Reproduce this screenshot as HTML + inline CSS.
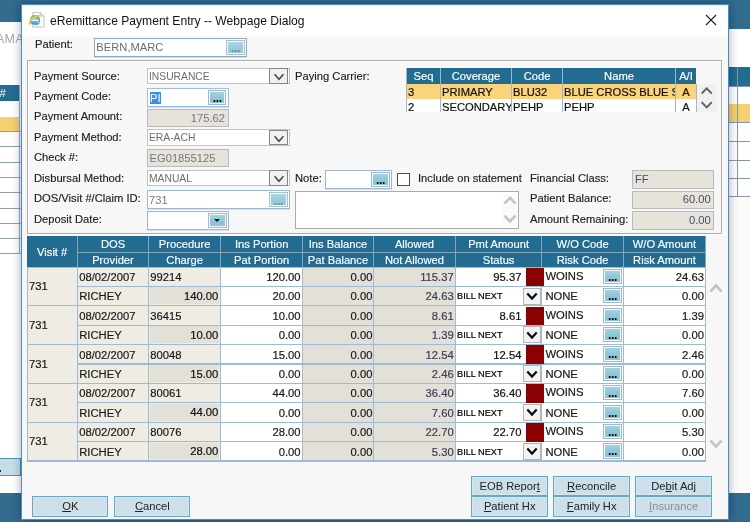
<!DOCTYPE html><html><head><meta charset="utf-8"><title>eRemittance Payment Entry</title><style>
html,body{margin:0;padding:0;}
body{width:750px;height:522px;overflow:hidden;position:relative;background:#316b8e;font-family:"Liberation Sans",Arial,sans-serif;font-size:11px;color:#1a1a1a;}
div,span{box-sizing:border-box;}
.a{position:absolute;}
.lbl{position:absolute;font-size:11.2px;color:#222;-webkit-text-stroke:0.15px;white-space:nowrap;line-height:14px;}
.inp{position:absolute;background:#fff;border:1px solid #a9b7c6;box-shadow:0 1px 0 #d6e1ee;font-size:11.2px;line-height:14px;color:#6d6d6d;white-space:nowrap;overflow:hidden;}
.dis{background:#e6e3da;border:1px solid #b9b9b9;color:#77777f;box-shadow:none;}
.sel{position:absolute;background:#fff;border:1px solid #c2c2c2;font-size:10.3px;color:#6d6d6d;white-space:nowrap;}
.dots{position:absolute;background:linear-gradient(#a3d2de,#8dc5d6 60%);border:1px solid #f2f8fb;outline:1px solid #a3b7cf;color:#000;font-size:12px;font-weight:bold;text-align:center;letter-spacing:-0.3px;overflow:hidden;}
.hd{position:absolute;background:#226c92;color:#fff;font-size:11.2px;-webkit-text-stroke:0.15px;text-align:center;white-space:nowrap;overflow:hidden;}
.c{position:absolute;font-size:11.25px;white-space:nowrap;overflow:hidden;color:#111;padding-top:0.5px;-webkit-text-stroke:0.2px;}
.btn{position:absolute;background:#cde0ea;border:1.4px solid #66a7c9;box-shadow:inset 0 0 0 1px #d6e6ef;font-size:11.2px;color:#2a2a2a;text-align:center;white-space:nowrap;}
u{text-decoration:underline;}
</style></head><body><div id="root" style="position:absolute;left:0;top:0;width:750px;height:522px;overflow:hidden;will-change:transform;">
<div class="a" style="left:0;top:22px;width:750px;height:471px;background:#fff;"></div>
<div class="a" style="left:-4px;top:31.8px;font-size:12.4px;line-height:14px;color:#a8a8a8;letter-spacing:0.3px;">AMA</div>
<div class="a" style="left:0;top:85px;width:20px;height:15.6px;background:#226c92;color:#fff;font-size:11.5px;line-height:16px;text-indent:-0.5px;">#</div>
<div class="a" style="left:0;top:116.5px;width:20px;height:15.3px;background:#f6d06f;"></div>
<div class="a" style="left:0;top:131px;width:21px;height:1.2px;background:#8e9eb0;"></div>
<div class="a" style="left:0;top:146px;width:21px;height:1.2px;background:#8e9eb0;"></div>
<div class="a" style="left:0;top:162px;width:21px;height:1.2px;background:#8e9eb0;"></div>
<div class="a" style="left:0;top:177px;width:21px;height:1.2px;background:#8e9eb0;"></div>
<div class="a" style="left:0;top:192px;width:21px;height:1.2px;background:#8e9eb0;"></div>
<div class="a" style="left:0;top:208px;width:21px;height:1.2px;background:#8e9eb0;"></div>
<div class="a" style="left:0;top:223px;width:21px;height:1.2px;background:#8e9eb0;"></div>
<div class="a" style="left:0;top:238px;width:21px;height:1.2px;background:#8e9eb0;"></div>
<div class="a" style="left:0;top:253px;width:21px;height:1.2px;background:#8e9eb0;"></div>
<div class="a" style="left:19.2px;top:85px;width:1.2px;height:169px;background:#a3afbe;"></div>
<div class="a" style="left:-2px;top:457.5px;width:22.8px;height:18px;background:#c6dce8;border:1px solid #4d92b8;"></div><div class="a" style="left:0;top:470px;width:1.2px;height:1.5px;background:#222;"></div>
<div class="a" style="left:728px;top:22px;width:22px;height:7px;background:#316b8e;"></div>
<div class="a" style="left:728px;top:67px;width:22px;height:19px;background:#226c92;"></div>
<div class="a" style="left:728px;top:104px;width:22px;height:18px;background:#f6d06f;"></div>
<div class="a" style="left:728px;top:86px;width:22px;height:1.3px;background:#8595ad;"></div>
<div class="a" style="left:728px;top:122px;width:22px;height:1.3px;background:#8595ad;"></div>
<div class="a" style="left:728px;top:141px;width:22px;height:1.3px;background:#8595ad;"></div>
<div class="a" style="left:728px;top:160px;width:22px;height:1.3px;background:#8595ad;"></div>
<div class="a" style="left:728px;top:178px;width:22px;height:1.3px;background:#8595ad;"></div>
<div class="a" style="left:728px;top:196px;width:22px;height:1.3px;background:#8595ad;"></div>
<div class="a" style="left:736.6px;top:67px;width:1.3px;height:130px;background:#8595ad;"></div>
<div class="a" style="left:728px;top:197px;width:22px;height:296px;background:#fbfbfa;"></div>
<div class="a" style="left:20.6px;top:4px;width:708.8px;height:516px;background:#f7f7f7;border:1px solid #3f8ede;border-left-width:1.4px;border-right-width:1.4px;box-shadow:0 0 9px rgba(0,0,0,.33);"></div>
<div class="a" style="left:22px;top:5px;width:706px;height:30.5px;background:#fff;"></div>
<svg class="a" style="left:28px;top:10px" width="18" height="19" viewBox="0 0 18 19">
<defs><radialGradient id="eg" cx="0.45" cy="0.4" r="0.7"><stop offset="0" stop-color="#9fdcf8"/><stop offset="0.55" stop-color="#47a6e6"/><stop offset="1" stop-color="#2b86cc"/></radialGradient></defs>
<path d="M4.400 2.700h8.300l3.300 3.300v11H4.400z" fill="#fdfdfd" stroke="#c2c2c2" stroke-width="1"/>
<path d="M12.700 2.700v3.300h3.300" fill="#f0f0f0" stroke="#bdbdbd" stroke-width="0.9"/>
<circle cx="7" cy="10" r="5.100" fill="url(#eg)"/>
<path d="M3.200 10.300h7.800" stroke="#eaf7ff" stroke-width="1.400" fill="none" opacity=".9"/>
<path d="M8.500 11.700h4.200l-1.200 2.300z" fill="#e8f5fc" opacity=".75"/>
<path d="M8.500 14.600c1.600-.2 2.800-1.100 3.400-2.500" stroke="#35b58f" stroke-width="1.100" fill="none" opacity=".8"/>
<path d="M1.500 13.900C1.600 9.600 5.600 5.700 11.400 5.700" stroke="#f6c61c" stroke-width="1.900" fill="none" stroke-linecap="round"/>
</svg>
<div class="a" style="left:50px;top:12.5px;font-size:12.1px;line-height:16px;color:#111;white-space:nowrap;" id="ttl">eRemittance Payment Entry -- Webpage Dialog</div>
<svg class="a" style="left:705px;top:14px" width="12" height="12" viewBox="0 0 12 12"><path d="M1 1l10 10M11 1L1 11" stroke="#222" stroke-width="1.1" fill="none"/></svg>
<div class="lbl" style="left:35px;top:37.3px;">Patient:</div>
<div class="inp" style="left:94px;top:38px;width:153px;height:18.5px;padding:1px 0 0 1.3px;border-color:#8fa8c4;">BERN,MARC</div>
<div class="dots" style="left:227px;top:41px;width:17px;height:13px;line-height:13px;opacity:.9;color:#5f7a86">...</div>
<div class="a" style="left:26.5px;top:60px;width:695.5px;height:173.6px;border:1px solid #acacac;box-shadow:inset 1px 1px 0 #fff, 1px 1px 0 #fff;"></div>
<div class="lbl" style="left:34px;top:68.6px;">Payment Source:</div>
<div class="lbl" style="left:34px;top:89px;">Payment Code:</div>
<div class="lbl" style="left:34px;top:109.3px;">Payment Amount:</div>
<div class="lbl" style="left:34px;top:130px;">Payment Method:</div>
<div class="lbl" style="left:34px;top:150px;">Check #:</div>
<div class="lbl" style="left:34px;top:171px;">Disbursal Method:</div>
<div class="lbl" style="left:34px;top:191.3px;">DOS/Visit #/Claim ID:</div>
<div class="lbl" style="left:34px;top:212px;">Deposit Date:</div>
<div class="sel" style="left:147px;top:67.5px;width:142.5px;height:16.6px;line-height:16.1px;padding-left:1px;">INSURANCE</div>
<div class="a" style="left:269.4px;top:68px;width:18.8px;height:15.8px;background:#f0f0f0;border:1px solid #868686;"></div>
<svg class="a" style="left:272.6px;top:72.8px" width="12" height="8" viewBox="0 0 12 8"><path d="M1.6 1.2L6 6.2l4.4-5" stroke="#484848" stroke-width="1.6" fill="none"/></svg>
<div class="inp" style="left:147px;top:88px;width:82px;height:19px;border-color:#9fbfe6;box-shadow:0 1px 0 #c9dcf0;padding:2px 0 0 2px;"><span style="background:#3390ff;color:#fff;">PI</span></div>
<div class="dots" style="left:209.3px;top:91.3px;width:16px;height:12.5px;line-height:13.5px;">...</div>
<div class="inp dis" style="left:147px;top:109px;width:82px;height:18px;text-align:right;padding:1px 3px 0 0;">175.62</div>
<div class="sel" style="left:147px;top:129.2px;width:142.5px;height:16.4px;line-height:15.9px;padding-left:1px;">ERA-ACH</div>
<div class="a" style="left:269.4px;top:129.7px;width:18.8px;height:15.6px;background:#f0f0f0;border:1px solid #868686;"></div>
<svg class="a" style="left:272.6px;top:134.5px" width="12" height="8" viewBox="0 0 12 8"><path d="M1.6 1.2L6 6.2l4.4-5" stroke="#484848" stroke-width="1.6" fill="none"/></svg>
<div class="inp dis" style="left:147px;top:149px;width:82px;height:18px;padding:1px 0 0 1.5px;">EG01855125</div>
<div class="sel" style="left:147px;top:169.8px;width:142.5px;height:16.5px;line-height:16px;padding-left:1px;">MANUAL</div>
<div class="a" style="left:269.4px;top:170.3px;width:18.8px;height:15.7px;background:#f0f0f0;border:1px solid #868686;"></div>
<svg class="a" style="left:272.6px;top:175.1px" width="12" height="8" viewBox="0 0 12 8"><path d="M1.6 1.2L6 6.2l4.4-5" stroke="#484848" stroke-width="1.6" fill="none"/></svg>
<div class="inp" style="left:147px;top:190px;width:143px;height:19px;border-color:#9fb6d1;padding:2px 0 0 1px;color:#777;">731</div>
<div class="dots" style="left:270px;top:193px;width:17px;height:13px;line-height:14.5px;opacity:.9;color:#5f7a86">...</div>
<div class="inp" style="left:147px;top:211px;width:82px;height:19px;border-color:#9fb6d1;"></div>
<div class="dots" style="left:209px;top:214px;width:17px;height:13px;"></div>
<svg class="a" style="left:214.3px;top:218.8px" width="6" height="3" viewBox="0 0 6 3"><path d="M0 0h6L3 3z" fill="#111"/></svg>
<div class="lbl" style="left:295px;top:69px;">Paying Carrier:</div>
<div class="lbl" style="left:295px;top:171px;">Note:</div>
<div class="inp" style="left:325px;top:170px;width:67px;height:19px;border-color:#9fb6d1;"></div>
<div class="dots" style="left:372px;top:173px;width:17px;height:13px;line-height:13.5px;">...</div>
<div class="a" style="left:397px;top:173px;width:13px;height:13px;background:#fff;border:1px solid #4d4d4d;"></div>
<div class="lbl" style="left:418px;top:171px;">Include on statement</div>
<div class="a" style="left:295px;top:190.5px;width:224px;height:38.3px;background:#fff;border:1px solid #ababab;"></div>
<svg class="a" style="left:503px;top:194px" width="14" height="32" viewBox="0 0 14 32"><rect width="14" height="32" fill="#fafafa"/><path d="M1.500 9.600l5.500-5.800 5.500 5.800M1.500 21.600l5.500 5.800 5.500-5.800" stroke="#c2c2c2" stroke-width="2.400" fill="none"/></svg>
<div class="lbl" style="left:530px;top:171px;">Financial Class:</div>
<div class="lbl" style="left:530px;top:191.3px;">Patient Balance:</div>
<div class="lbl" style="left:530px;top:211.7px;">Amount Remaining:</div>
<div class="inp dis" style="left:632px;top:170px;width:82px;height:19px;padding:1px 0 0 2px;color:#4a4a66;">FF</div>
<div class="inp dis" style="left:632px;top:191px;width:82px;height:18px;text-align:right;padding:0.3px 2.3px 0 0;color:#4a4a66;">60.00</div>
<div class="inp dis" style="left:632px;top:211px;width:82px;height:19px;text-align:right;padding:0.7px 2.3px 0 0;color:#4a4a66;">0.00</div>
<div class="hd" style="left:406px;top:68px;width:34px;height:16px;line-height:17px;border-left:1px solid #9bb8d3;">Seq</div>
<div class="hd" style="left:440px;top:68px;width:71px;height:16px;line-height:17px;border-left:1px solid #9bb8d3;">Coverage</div>
<div class="hd" style="left:511px;top:68px;width:51px;height:16px;line-height:17px;border-left:1px solid #9bb8d3;">Code</div>
<div class="hd" style="left:562px;top:68px;width:113px;height:16px;line-height:17px;border-left:1px solid #9bb8d3;">Name</div>
<div class="hd" style="left:675px;top:68px;width:21px;height:16px;line-height:17px;border-left:1px solid #9bb8d3;">A/I</div>
<div class="c" style="left:406px;top:84px;width:34px;height:15px;line-height:15.6px;background:#fbd37a;border-left:1px solid #9bb8d3;font-size:11.2px;padding-left:1px;">3</div>
<div class="c" style="left:406px;top:99px;width:34px;height:13.2px;line-height:15.4px;background:#fff;border-left:1px solid #9bb8d3;font-size:11.2px;padding-left:1px;">2</div>
<div class="c" style="left:440px;top:84px;width:71px;height:15px;line-height:15.6px;background:#fbd37a;border-left:1px solid #9bb8d3;font-size:11.2px;padding-left:1px;">PRIMARY</div>
<div class="c" style="left:440px;top:99px;width:71px;height:13.2px;line-height:15.4px;background:#fff;border-left:1px solid #9bb8d3;font-size:11.2px;padding-left:1px;">SECONDARY</div>
<div class="c" style="left:511px;top:84px;width:51px;height:15px;line-height:15.6px;background:#fbd37a;border-left:1px solid #9bb8d3;font-size:11.2px;padding-left:1px;">BLU32</div>
<div class="c" style="left:511px;top:99px;width:51px;height:13.2px;line-height:15.4px;background:#fff;border-left:1px solid #9bb8d3;font-size:11.2px;padding-left:1px;">PEHP</div>
<div class="c" style="left:562px;top:84px;width:113px;height:15px;line-height:15.6px;background:#fbd37a;border-left:1px solid #9bb8d3;font-size:11.2px;padding-left:1px;">BLUE CROSS BLUE SHIELD</div>
<div class="c" style="left:562px;top:99px;width:113px;height:13.2px;line-height:15.4px;background:#fff;border-left:1px solid #9bb8d3;font-size:11.2px;padding-left:1px;">PEHP</div>
<div class="c" style="left:675px;top:84px;width:21px;height:15px;line-height:15.6px;background:#fbd37a;border-left:1px solid #9bb8d3;font-size:11.2px;text-align:center;">A</div>
<div class="c" style="left:675px;top:99px;width:21px;height:13.2px;line-height:15.4px;background:#fff;border-left:1px solid #9bb8d3;font-size:11.2px;text-align:center;">A</div>
<div class="a" style="left:696px;top:84px;width:1px;height:28px;background:#9bb8d3;"></div>
<svg class="a" style="left:697px;top:84px" width="20" height="28" viewBox="0 0 20 28"><rect width="20" height="28" fill="#f0f0f0"/><path d="M4.600 9.600L9.700 4.400L14.800 9.600M4.600 18.200L9.700 23.400L14.800 18.200" stroke="#5e5e5e" stroke-width="1.900" fill="none"/></svg>
<div class="a" style="left:27px;top:236px;width:679px;height:226px;background:#9dbad7;"></div>
<div class="a" style="left:27px;top:236px;width:679px;height:31px;background:#86a5bc;"></div>
<div class="hd" style="left:27.4px;top:236px;width:49.6px;height:31px;line-height:33px;">Visit #</div>
<div class="hd" style="left:78px;top:236px;width:70px;height:16.3px;line-height:16.5px;">DOS</div>
<div class="hd" style="left:78px;top:253.2px;width:70px;height:13.8px;line-height:14px;">Provider</div>
<div class="hd" style="left:149px;top:236px;width:71.3px;height:16.3px;line-height:16.5px;">Procedure</div>
<div class="hd" style="left:149px;top:253.2px;width:71.3px;height:13.8px;line-height:14px;">Charge</div>
<div class="hd" style="left:221.3px;top:236px;width:80.7px;height:16.3px;line-height:16.5px;">Ins Portion</div>
<div class="hd" style="left:221.3px;top:253.2px;width:80.7px;height:13.8px;line-height:14px;">Pat Portion</div>
<div class="hd" style="left:303px;top:236px;width:70px;height:16.3px;line-height:16.5px;">Ins Balance</div>
<div class="hd" style="left:303px;top:253.2px;width:70px;height:13.8px;line-height:14px;">Pat Balance</div>
<div class="hd" style="left:374px;top:236px;width:81px;height:16.3px;line-height:16.5px;">Allowed</div>
<div class="hd" style="left:374px;top:253.2px;width:81px;height:13.8px;line-height:14px;">Not Allowed</div>
<div class="hd" style="left:456px;top:236px;width:85.2px;height:16.3px;line-height:16.5px;">Pmt Amount</div>
<div class="hd" style="left:456px;top:253.2px;width:85.2px;height:13.8px;line-height:14px;">Status</div>
<div class="hd" style="left:542.2px;top:236px;width:80.8px;height:16.3px;line-height:16.5px;">W/O Code</div>
<div class="hd" style="left:542.2px;top:253.2px;width:80.8px;height:13.8px;line-height:14px;">Risk Code</div>
<div class="hd" style="left:624px;top:236px;width:81px;height:16.3px;line-height:16.5px;">W/O Amount</div>
<div class="hd" style="left:624px;top:253.2px;width:81px;height:13.8px;line-height:14px;">Risk Amount</div>
<div class="c" style="left:28.0px;top:267.5px;width:49.0px;height:37.8px;line-height:37.8px;background:#efede3;color:#1a1a1a;padding-left:1.2px;padding-left:1px;">731</div>
<div class="c" style="left:78.0px;top:267.5px;width:70.0px;height:18.4px;line-height:18.4px;background:#efede3;color:#1a1a1a;padding-left:1.2px;">08/02/2007</div>
<div class="c" style="left:78.0px;top:286.9px;width:70.0px;height:18.4px;line-height:18.4px;background:#efede3;color:#1a1a1a;padding-left:1.2px;">RICHEY</div>
<div class="c" style="left:149.0px;top:267.5px;width:71.3px;height:18.4px;line-height:18.4px;background:#efede3;color:#1a1a1a;padding-left:1.2px;">99214</div>
<div class="c" style="left:149.0px;top:286.9px;width:71.3px;height:18.4px;line-height:18.4px;background:#efede3;color:#1a1a1a;padding-left:1.2px;"></div>
<div class="c" style="left:150px;top:287.4px;width:69.3px;height:16.9px;line-height:16.9px;background:#e3e0d8;text-align:right;padding-right:1px;">140.00</div>
<div class="c" style="left:221.3px;top:267.5px;width:80.7px;height:18.4px;line-height:18.4px;background:#fff;color:#1a1a1a;padding-right:3px;text-align:right;padding-right:1.4px;">120.00</div>
<div class="c" style="left:221.3px;top:286.9px;width:80.7px;height:18.4px;line-height:18.4px;background:#fff;color:#1a1a1a;padding-right:3px;text-align:right;padding-right:1.4px;">20.00</div>
<div class="c" style="left:303.0px;top:267.5px;width:70.0px;height:18.4px;line-height:18.4px;background:#e3e0d8;color:#1a1a1a;padding-right:3px;text-align:right;padding-right:0.6px;">0.00</div>
<div class="c" style="left:303.0px;top:286.9px;width:70.0px;height:18.4px;line-height:18.4px;background:#e3e0d8;color:#1a1a1a;padding-right:3px;text-align:right;padding-right:0.6px;">0.00</div>
<div class="c" style="left:374.0px;top:267.5px;width:81.0px;height:18.4px;line-height:18.4px;background:#e3e0d8;color:#3d3d58;padding-right:3px;text-align:right;padding-right:1.3px;">115.37</div>
<div class="c" style="left:374.0px;top:286.9px;width:81.0px;height:18.4px;line-height:18.4px;background:#e3e0d8;color:#3d3d58;padding-right:3px;text-align:right;padding-right:1.3px;">24.63</div>
<div class="c" style="left:456.0px;top:267.5px;width:85.2px;height:18.4px;line-height:18.4px;background:#fff;color:#1a1a1a;padding-left:1.2px;"></div>
<div class="c" style="left:456px;top:267.5px;width:70px;height:18.4px;line-height:18.4px;text-align:right;padding-right:4.6px;">95.37</div>
<div class="a" style="left:526.2px;top:267.8px;width:17.4px;height:18.6px;background:#8b0000;z-index:2;"></div>
<div class="c" style="left:456.0px;top:286.9px;width:85.2px;height:18.4px;line-height:18.4px;background:#fff;color:#000;padding-left:1.2px;font-size:9.2px;padding-left:1px;">BILL NEXT</div>
<div class="a" style="left:523.3px;top:287.5px;width:17.9px;height:17.2px;background:#f3f3f3;border:1px solid #b5b5b5;"></div>
<svg class="a" style="left:526.2px;top:292.0px" width="12" height="9" viewBox="0 0 12 9"><path d="M1.300 1.600L6 6.600l4.700-5" stroke="#0a0a0a" stroke-width="2.200" fill="none"/></svg>
<div class="c" style="left:542.2px;top:267.5px;width:80.8px;height:18.4px;line-height:18.4px;background:#fff;color:#1a1a1a;padding-left:1.2px;padding-left:3.2px;"><span style="position:relative;top:-1.1px">WOINS</span></div>
<div class="c" style="left:542.2px;top:286.9px;width:80.8px;height:18.4px;line-height:18.4px;background:#fff;color:#1a1a1a;padding-left:1.2px;padding-left:3.2px;">NONE</div>
<div class="dots" style="left:604px;top:269.8px;width:17px;height:13.3px;line-height:13.5px;">...</div>
<div class="dots" style="left:604px;top:289.2px;width:17px;height:13.3px;line-height:13.5px;">...</div>
<div class="c" style="left:624.0px;top:267.5px;width:81.0px;height:18.4px;line-height:18.4px;background:#fff;color:#1a1a1a;padding-right:3px;text-align:right;padding-right:1px;">24.63</div>
<div class="c" style="left:624.0px;top:286.9px;width:81.0px;height:18.4px;line-height:18.4px;background:#fff;color:#1a1a1a;padding-right:3px;text-align:right;padding-right:1px;">0.00</div>
<div class="c" style="left:28.0px;top:306.3px;width:49.0px;height:37.8px;line-height:37.8px;background:#efede3;color:#1a1a1a;padding-left:1.2px;padding-left:1px;">731</div>
<div class="c" style="left:78.0px;top:306.3px;width:70.0px;height:18.4px;line-height:18.4px;background:#efede3;color:#1a1a1a;padding-left:1.2px;">08/02/2007</div>
<div class="c" style="left:78.0px;top:325.7px;width:70.0px;height:18.4px;line-height:18.4px;background:#efede3;color:#1a1a1a;padding-left:1.2px;">RICHEY</div>
<div class="c" style="left:149.0px;top:306.3px;width:71.3px;height:18.4px;line-height:18.4px;background:#efede3;color:#1a1a1a;padding-left:1.2px;">36415</div>
<div class="c" style="left:149.0px;top:325.7px;width:71.3px;height:18.4px;line-height:18.4px;background:#efede3;color:#1a1a1a;padding-left:1.2px;"></div>
<div class="c" style="left:150px;top:326.2px;width:69.3px;height:16.9px;line-height:16.9px;background:#e3e0d8;text-align:right;padding-right:1px;">10.00</div>
<div class="c" style="left:221.3px;top:306.3px;width:80.7px;height:18.4px;line-height:18.4px;background:#fff;color:#1a1a1a;padding-right:3px;text-align:right;padding-right:1.4px;">10.00</div>
<div class="c" style="left:221.3px;top:325.7px;width:80.7px;height:18.4px;line-height:18.4px;background:#fff;color:#1a1a1a;padding-right:3px;text-align:right;padding-right:1.4px;">0.00</div>
<div class="c" style="left:303.0px;top:306.3px;width:70.0px;height:18.4px;line-height:18.4px;background:#e3e0d8;color:#1a1a1a;padding-right:3px;text-align:right;padding-right:0.6px;">0.00</div>
<div class="c" style="left:303.0px;top:325.7px;width:70.0px;height:18.4px;line-height:18.4px;background:#e3e0d8;color:#1a1a1a;padding-right:3px;text-align:right;padding-right:0.6px;">0.00</div>
<div class="c" style="left:374.0px;top:306.3px;width:81.0px;height:18.4px;line-height:18.4px;background:#e3e0d8;color:#3d3d58;padding-right:3px;text-align:right;padding-right:1.3px;">8.61</div>
<div class="c" style="left:374.0px;top:325.7px;width:81.0px;height:18.4px;line-height:18.4px;background:#e3e0d8;color:#3d3d58;padding-right:3px;text-align:right;padding-right:1.3px;">1.39</div>
<div class="c" style="left:456.0px;top:306.3px;width:85.2px;height:18.4px;line-height:18.4px;background:#fff;color:#1a1a1a;padding-left:1.2px;"></div>
<div class="c" style="left:456px;top:306.3px;width:70px;height:18.4px;line-height:18.4px;text-align:right;padding-right:4.6px;">8.61</div>
<div class="a" style="left:526.2px;top:306.6px;width:17.4px;height:18.6px;background:#8b0000;z-index:2;"></div>
<div class="c" style="left:456.0px;top:325.7px;width:85.2px;height:18.4px;line-height:18.4px;background:#fff;color:#000;padding-left:1.2px;font-size:9.2px;padding-left:1px;">BILL NEXT</div>
<div class="a" style="left:523.3px;top:326.3px;width:17.9px;height:17.2px;background:#f3f3f3;border:1px solid #b5b5b5;"></div>
<svg class="a" style="left:526.2px;top:330.8px" width="12" height="9" viewBox="0 0 12 9"><path d="M1.300 1.600L6 6.600l4.700-5" stroke="#0a0a0a" stroke-width="2.200" fill="none"/></svg>
<div class="c" style="left:542.2px;top:306.3px;width:80.8px;height:18.4px;line-height:18.4px;background:#fff;color:#1a1a1a;padding-left:1.2px;padding-left:3.2px;"><span style="position:relative;top:-1.1px">WOINS</span></div>
<div class="c" style="left:542.2px;top:325.7px;width:80.8px;height:18.4px;line-height:18.4px;background:#fff;color:#1a1a1a;padding-left:1.2px;padding-left:3.2px;">NONE</div>
<div class="dots" style="left:604px;top:308.6px;width:17px;height:13.3px;line-height:13.5px;">...</div>
<div class="dots" style="left:604px;top:328.0px;width:17px;height:13.3px;line-height:13.5px;">...</div>
<div class="c" style="left:624.0px;top:306.3px;width:81.0px;height:18.4px;line-height:18.4px;background:#fff;color:#1a1a1a;padding-right:3px;text-align:right;padding-right:1px;">1.39</div>
<div class="c" style="left:624.0px;top:325.7px;width:81.0px;height:18.4px;line-height:18.4px;background:#fff;color:#1a1a1a;padding-right:3px;text-align:right;padding-right:1px;">0.00</div>
<div class="c" style="left:28.0px;top:345.1px;width:49.0px;height:37.8px;line-height:37.8px;background:#efede3;color:#1a1a1a;padding-left:1.2px;padding-left:1px;">731</div>
<div class="c" style="left:78.0px;top:345.1px;width:70.0px;height:18.4px;line-height:18.4px;background:#efede3;color:#1a1a1a;padding-left:1.2px;">08/02/2007</div>
<div class="c" style="left:78.0px;top:364.5px;width:70.0px;height:18.4px;line-height:18.4px;background:#efede3;color:#1a1a1a;padding-left:1.2px;">RICHEY</div>
<div class="c" style="left:149.0px;top:345.1px;width:71.3px;height:18.4px;line-height:18.4px;background:#efede3;color:#1a1a1a;padding-left:1.2px;">80048</div>
<div class="c" style="left:149.0px;top:364.5px;width:71.3px;height:18.4px;line-height:18.4px;background:#efede3;color:#1a1a1a;padding-left:1.2px;"></div>
<div class="c" style="left:150px;top:365.0px;width:69.3px;height:16.9px;line-height:16.9px;background:#e3e0d8;text-align:right;padding-right:1px;">15.00</div>
<div class="c" style="left:221.3px;top:345.1px;width:80.7px;height:18.4px;line-height:18.4px;background:#fff;color:#1a1a1a;padding-right:3px;text-align:right;padding-right:1.4px;">15.00</div>
<div class="c" style="left:221.3px;top:364.5px;width:80.7px;height:18.4px;line-height:18.4px;background:#fff;color:#1a1a1a;padding-right:3px;text-align:right;padding-right:1.4px;">0.00</div>
<div class="c" style="left:303.0px;top:345.1px;width:70.0px;height:18.4px;line-height:18.4px;background:#e3e0d8;color:#1a1a1a;padding-right:3px;text-align:right;padding-right:0.6px;">0.00</div>
<div class="c" style="left:303.0px;top:364.5px;width:70.0px;height:18.4px;line-height:18.4px;background:#e3e0d8;color:#1a1a1a;padding-right:3px;text-align:right;padding-right:0.6px;">0.00</div>
<div class="c" style="left:374.0px;top:345.1px;width:81.0px;height:18.4px;line-height:18.4px;background:#e3e0d8;color:#3d3d58;padding-right:3px;text-align:right;padding-right:1.3px;">12.54</div>
<div class="c" style="left:374.0px;top:364.5px;width:81.0px;height:18.4px;line-height:18.4px;background:#e3e0d8;color:#3d3d58;padding-right:3px;text-align:right;padding-right:1.3px;">2.46</div>
<div class="c" style="left:456.0px;top:345.1px;width:85.2px;height:18.4px;line-height:18.4px;background:#fff;color:#1a1a1a;padding-left:1.2px;"></div>
<div class="c" style="left:456px;top:345.1px;width:70px;height:18.4px;line-height:18.4px;text-align:right;padding-right:4.6px;">12.54</div>
<div class="a" style="left:526.2px;top:345.4px;width:17.4px;height:18.6px;background:#8b0000;z-index:2;"></div>
<div class="c" style="left:456.0px;top:364.5px;width:85.2px;height:18.4px;line-height:18.4px;background:#fff;color:#000;padding-left:1.2px;font-size:9.2px;padding-left:1px;">BILL NEXT</div>
<div class="a" style="left:523.3px;top:365.1px;width:17.9px;height:17.2px;background:#f3f3f3;border:1px solid #b5b5b5;"></div>
<svg class="a" style="left:526.2px;top:369.6px" width="12" height="9" viewBox="0 0 12 9"><path d="M1.300 1.600L6 6.600l4.700-5" stroke="#0a0a0a" stroke-width="2.200" fill="none"/></svg>
<div class="c" style="left:542.2px;top:345.1px;width:80.8px;height:18.4px;line-height:18.4px;background:#fff;color:#1a1a1a;padding-left:1.2px;padding-left:3.2px;"><span style="position:relative;top:-1.1px">WOINS</span></div>
<div class="c" style="left:542.2px;top:364.5px;width:80.8px;height:18.4px;line-height:18.4px;background:#fff;color:#1a1a1a;padding-left:1.2px;padding-left:3.2px;">NONE</div>
<div class="dots" style="left:604px;top:347.4px;width:17px;height:13.3px;line-height:13.5px;">...</div>
<div class="dots" style="left:604px;top:366.8px;width:17px;height:13.3px;line-height:13.5px;">...</div>
<div class="c" style="left:624.0px;top:345.1px;width:81.0px;height:18.4px;line-height:18.4px;background:#fff;color:#1a1a1a;padding-right:3px;text-align:right;padding-right:1px;">2.46</div>
<div class="c" style="left:624.0px;top:364.5px;width:81.0px;height:18.4px;line-height:18.4px;background:#fff;color:#1a1a1a;padding-right:3px;text-align:right;padding-right:1px;">0.00</div>
<div class="c" style="left:28.0px;top:383.9px;width:49.0px;height:37.8px;line-height:37.8px;background:#efede3;color:#1a1a1a;padding-left:1.2px;padding-left:1px;">731</div>
<div class="c" style="left:78.0px;top:383.9px;width:70.0px;height:18.4px;line-height:18.4px;background:#efede3;color:#1a1a1a;padding-left:1.2px;">08/02/2007</div>
<div class="c" style="left:78.0px;top:403.3px;width:70.0px;height:18.4px;line-height:18.4px;background:#efede3;color:#1a1a1a;padding-left:1.2px;">RICHEY</div>
<div class="c" style="left:149.0px;top:383.9px;width:71.3px;height:18.4px;line-height:18.4px;background:#efede3;color:#1a1a1a;padding-left:1.2px;">80061</div>
<div class="c" style="left:149.0px;top:403.3px;width:71.3px;height:18.4px;line-height:18.4px;background:#efede3;color:#1a1a1a;padding-left:1.2px;"></div>
<div class="c" style="left:150px;top:403.8px;width:69.3px;height:16.9px;line-height:16.9px;background:#e3e0d8;text-align:right;padding-right:1px;">44.00</div>
<div class="c" style="left:221.3px;top:383.9px;width:80.7px;height:18.4px;line-height:18.4px;background:#fff;color:#1a1a1a;padding-right:3px;text-align:right;padding-right:1.4px;">44.00</div>
<div class="c" style="left:221.3px;top:403.3px;width:80.7px;height:18.4px;line-height:18.4px;background:#fff;color:#1a1a1a;padding-right:3px;text-align:right;padding-right:1.4px;">0.00</div>
<div class="c" style="left:303.0px;top:383.9px;width:70.0px;height:18.4px;line-height:18.4px;background:#e3e0d8;color:#1a1a1a;padding-right:3px;text-align:right;padding-right:0.6px;">0.00</div>
<div class="c" style="left:303.0px;top:403.3px;width:70.0px;height:18.4px;line-height:18.4px;background:#e3e0d8;color:#1a1a1a;padding-right:3px;text-align:right;padding-right:0.6px;">0.00</div>
<div class="c" style="left:374.0px;top:383.9px;width:81.0px;height:18.4px;line-height:18.4px;background:#e3e0d8;color:#3d3d58;padding-right:3px;text-align:right;padding-right:1.3px;">36.40</div>
<div class="c" style="left:374.0px;top:403.3px;width:81.0px;height:18.4px;line-height:18.4px;background:#e3e0d8;color:#3d3d58;padding-right:3px;text-align:right;padding-right:1.3px;">7.60</div>
<div class="c" style="left:456.0px;top:383.9px;width:85.2px;height:18.4px;line-height:18.4px;background:#fff;color:#1a1a1a;padding-left:1.2px;"></div>
<div class="c" style="left:456px;top:383.9px;width:70px;height:18.4px;line-height:18.4px;text-align:right;padding-right:4.6px;">36.40</div>
<div class="a" style="left:526.2px;top:384.2px;width:17.4px;height:18.6px;background:#8b0000;z-index:2;"></div>
<div class="c" style="left:456.0px;top:403.3px;width:85.2px;height:18.4px;line-height:18.4px;background:#fff;color:#000;padding-left:1.2px;font-size:9.2px;padding-left:1px;">BILL NEXT</div>
<div class="a" style="left:523.3px;top:403.9px;width:17.9px;height:17.2px;background:#f3f3f3;border:1px solid #b5b5b5;"></div>
<svg class="a" style="left:526.2px;top:408.4px" width="12" height="9" viewBox="0 0 12 9"><path d="M1.300 1.600L6 6.600l4.700-5" stroke="#0a0a0a" stroke-width="2.200" fill="none"/></svg>
<div class="c" style="left:542.2px;top:383.9px;width:80.8px;height:18.4px;line-height:18.4px;background:#fff;color:#1a1a1a;padding-left:1.2px;padding-left:3.2px;"><span style="position:relative;top:-1.1px">WOINS</span></div>
<div class="c" style="left:542.2px;top:403.3px;width:80.8px;height:18.4px;line-height:18.4px;background:#fff;color:#1a1a1a;padding-left:1.2px;padding-left:3.2px;">NONE</div>
<div class="dots" style="left:604px;top:386.2px;width:17px;height:13.3px;line-height:13.5px;">...</div>
<div class="dots" style="left:604px;top:405.6px;width:17px;height:13.3px;line-height:13.5px;">...</div>
<div class="c" style="left:624.0px;top:383.9px;width:81.0px;height:18.4px;line-height:18.4px;background:#fff;color:#1a1a1a;padding-right:3px;text-align:right;padding-right:1px;">7.60</div>
<div class="c" style="left:624.0px;top:403.3px;width:81.0px;height:18.4px;line-height:18.4px;background:#fff;color:#1a1a1a;padding-right:3px;text-align:right;padding-right:1px;">0.00</div>
<div class="c" style="left:28.0px;top:422.7px;width:49.0px;height:37.8px;line-height:37.8px;background:#efede3;color:#1a1a1a;padding-left:1.2px;padding-left:1px;">731</div>
<div class="c" style="left:78.0px;top:422.7px;width:70.0px;height:18.4px;line-height:18.4px;background:#efede3;color:#1a1a1a;padding-left:1.2px;">08/02/2007</div>
<div class="c" style="left:78.0px;top:442.1px;width:70.0px;height:18.4px;line-height:18.4px;background:#efede3;color:#1a1a1a;padding-left:1.2px;">RICHEY</div>
<div class="c" style="left:149.0px;top:422.7px;width:71.3px;height:18.4px;line-height:18.4px;background:#efede3;color:#1a1a1a;padding-left:1.2px;">80076</div>
<div class="c" style="left:149.0px;top:442.1px;width:71.3px;height:18.4px;line-height:18.4px;background:#efede3;color:#1a1a1a;padding-left:1.2px;"></div>
<div class="c" style="left:150px;top:442.6px;width:69.3px;height:16.9px;line-height:16.9px;background:#e3e0d8;text-align:right;padding-right:1px;">28.00</div>
<div class="c" style="left:221.3px;top:422.7px;width:80.7px;height:18.4px;line-height:18.4px;background:#fff;color:#1a1a1a;padding-right:3px;text-align:right;padding-right:1.4px;">28.00</div>
<div class="c" style="left:221.3px;top:442.1px;width:80.7px;height:18.4px;line-height:18.4px;background:#fff;color:#1a1a1a;padding-right:3px;text-align:right;padding-right:1.4px;">0.00</div>
<div class="c" style="left:303.0px;top:422.7px;width:70.0px;height:18.4px;line-height:18.4px;background:#e3e0d8;color:#1a1a1a;padding-right:3px;text-align:right;padding-right:0.6px;">0.00</div>
<div class="c" style="left:303.0px;top:442.1px;width:70.0px;height:18.4px;line-height:18.4px;background:#e3e0d8;color:#1a1a1a;padding-right:3px;text-align:right;padding-right:0.6px;">0.00</div>
<div class="c" style="left:374.0px;top:422.7px;width:81.0px;height:18.4px;line-height:18.4px;background:#e3e0d8;color:#3d3d58;padding-right:3px;text-align:right;padding-right:1.3px;">22.70</div>
<div class="c" style="left:374.0px;top:442.1px;width:81.0px;height:18.4px;line-height:18.4px;background:#e3e0d8;color:#3d3d58;padding-right:3px;text-align:right;padding-right:1.3px;">5.30</div>
<div class="c" style="left:456.0px;top:422.7px;width:85.2px;height:18.4px;line-height:18.4px;background:#fff;color:#1a1a1a;padding-left:1.2px;"></div>
<div class="c" style="left:456px;top:422.7px;width:70px;height:18.4px;line-height:18.4px;text-align:right;padding-right:4.6px;">22.70</div>
<div class="a" style="left:526.2px;top:423.0px;width:17.4px;height:18.6px;background:#8b0000;z-index:2;"></div>
<div class="c" style="left:456.0px;top:442.1px;width:85.2px;height:18.4px;line-height:18.4px;background:#fff;color:#000;padding-left:1.2px;font-size:9.2px;padding-left:1px;">BILL NEXT</div>
<div class="a" style="left:523.3px;top:442.7px;width:17.9px;height:17.2px;background:#f3f3f3;border:1px solid #b5b5b5;"></div>
<svg class="a" style="left:526.2px;top:447.2px" width="12" height="9" viewBox="0 0 12 9"><path d="M1.300 1.600L6 6.600l4.700-5" stroke="#0a0a0a" stroke-width="2.200" fill="none"/></svg>
<div class="c" style="left:542.2px;top:422.7px;width:80.8px;height:18.4px;line-height:18.4px;background:#fff;color:#1a1a1a;padding-left:1.2px;padding-left:3.2px;"><span style="position:relative;top:-1.1px">WOINS</span></div>
<div class="c" style="left:542.2px;top:442.1px;width:80.8px;height:18.4px;line-height:18.4px;background:#fff;color:#1a1a1a;padding-left:1.2px;padding-left:3.2px;">NONE</div>
<div class="dots" style="left:604px;top:425.0px;width:17px;height:13.3px;line-height:13.5px;">...</div>
<div class="dots" style="left:604px;top:444.4px;width:17px;height:13.3px;line-height:13.5px;">...</div>
<div class="c" style="left:624.0px;top:422.7px;width:81.0px;height:18.4px;line-height:18.4px;background:#fff;color:#1a1a1a;padding-right:3px;text-align:right;padding-right:1px;">5.30</div>
<div class="c" style="left:624.0px;top:442.1px;width:81.0px;height:18.4px;line-height:18.4px;background:#fff;color:#1a1a1a;padding-right:3px;text-align:right;padding-right:1px;">0.00</div>
<svg class="a" style="left:709px;top:283px" width="14" height="10" viewBox="0 0 14 10"><path d="M1.5 8.5L7 2.5l5.5 6" stroke="#c4c4c4" stroke-width="2.6" fill="none"/></svg>
<svg class="a" style="left:709px;top:439px" width="14" height="10" viewBox="0 0 14 10"><path d="M1.5 1.5L7 7.5l5.5-6" stroke="#c4c4c4" stroke-width="2.6" fill="none"/></svg>
<div class="btn" style="left:32.3px;top:496.2px;width:76.2px;height:20.9px;line-height:18.7px;color:#222;"><u>O</u>K</div>
<div class="btn" style="left:114.3px;top:496.2px;width:76.2px;height:20.9px;line-height:18.7px;color:#222;"><u>C</u>ancel</div>
<div class="btn" style="left:471.4px;top:476.1px;width:76.6px;height:20.3px;line-height:18.1px;color:#222;">EOB Repor<u>t</u></div>
<div class="btn" style="left:553.4px;top:476.1px;width:76.6px;height:20.3px;line-height:18.1px;color:#222;"><u>R</u>econcile</div>
<div class="btn" style="left:635.4px;top:476.1px;width:76.6px;height:20.3px;line-height:18.1px;color:#222;">De<u>b</u>it Adj</div>
<div class="btn" style="left:471.4px;top:495.8px;width:76.6px;height:21.3px;line-height:19.1px;color:#222;"><u>P</u>atient Hx</div>
<div class="btn" style="left:553.4px;top:495.8px;width:76.6px;height:21.3px;line-height:19.1px;color:#222;"><u>F</u>amily Hx</div>
<div class="btn" style="left:635.4px;top:495.8px;width:76.6px;height:21.3px;line-height:19.1px;color:#8a8f94;"><u>I</u>nsurance</div>
</div></body></html>
